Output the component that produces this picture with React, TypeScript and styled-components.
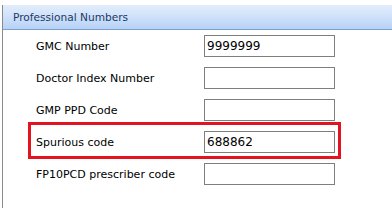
import React from "react";
import styled, { createGlobalStyle } from "styled-components";

const Global = createGlobalStyle`
  html, body { margin: 0; padding: 0; background: #ffffff; }
  body { width: 392px; height: 208px; overflow: hidden; }
`;

const Page = styled.div`
  padding: 5px 0 0 2px;
  height: 208px;
  box-sizing: border-box;
  font-family: "DejaVu Sans", Verdana, sans-serif;
`;

const Panel = styled.section`
  border-left: 1px solid #8a8a8a;
  height: 203px;
  box-sizing: border-box;
`;

const Header = styled.header`
  height: 24px;
  border-bottom: 1px solid #7e9ec8;
  background: linear-gradient(to bottom, #e2edfc 0%, #d0e2fa 45%, #b7d2f7 100%);
  display: flex;
  align-items: center;
  padding-left: 10px;
  font-size: 10.6px;
  color: #1b3a66;
`;

const Form = styled.div`
  display: flex;
  flex-direction: column;
  gap: 10px;
  padding: 5px 0 0 33px;
`;

const Row = styled.div`
  position: relative;
  display: grid;
  grid-template-columns: 168px 131px;
  align-items: center;
  height: 22px;
`;

const Label = styled.label`
  font-size: 11px;
  color: #000000;
  white-space: nowrap;
`;

const Field = styled.div`
  height: 22px;
  box-sizing: border-box;
  border: 1px solid #7f7f7f;
  background: #ffffff;
  padding-left: 2px;
  display: flex;
  align-items: center;
  font-size: 12px;
  color: #000000;
`;

const Highlight = styled.div`
  position: absolute;
  left: -8px;
  top: -9px;
  width: 313px;
  height: 37px;
  box-sizing: border-box;
  border: 3px solid #e3141f;
  pointer-events: none;
`;

const rows = [
  { label: "GMC Number", value: "9999999" },
  { label: "Doctor Index Number", value: "" },
  { label: "GMP PPD Code", value: "" },
  { label: "Spurious code", value: "688862", highlight: true },
  { label: "FP10PCD prescriber code", value: "" },
];

export default function App() {
  return (
    <>
      <Global />
      <Page>
        <Panel>
          <Header>Professional Numbers</Header>
          <Form>
            {rows.map((r) => (
              <Row key={r.label}>
                <Label>{r.label}</Label>
                <Field>{r.value}</Field>
                {r.highlight && <Highlight />}
              </Row>
            ))}
          </Form>
        </Panel>
      </Page>
    </>
  );
}
